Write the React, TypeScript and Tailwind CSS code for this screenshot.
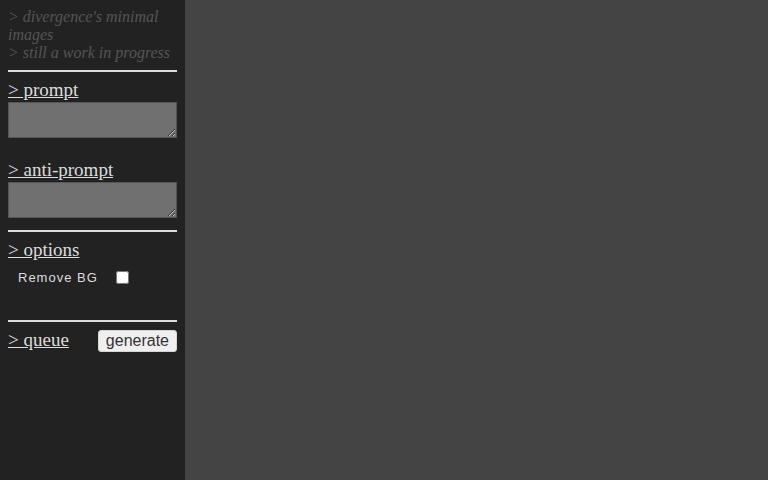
export default function App() {
  return (
    <div className="flex h-[480px] w-[768px] overflow-hidden" style={{ fontFamily: '"Liberation Serif", serif' }}>
      <aside className="flex w-[185px] shrink-0 flex-col bg-[#222222] px-2 pt-[8px]">
        <div className="text-[16px] italic leading-[18px] text-[#555555]">
          <p>&gt; divergence's minimal images</p>
          <p>&gt; still a work in progress</p>
        </div>
        <hr className="mt-[8px] border-t-2 border-[#dddddd]" />

        <a href="#" className="mt-[7px] text-[19px] leading-[22px] text-[#dddddd] underline">&gt; prompt</a>
        <textarea className="mt-[1px] h-[36px] w-full resize-y border border-[#555555] bg-[#707070]" />

        <a href="#" className="mt-[21px] text-[19px] leading-[22px] text-[#dddddd] underline">&gt; anti-prompt</a>
        <textarea className="mt-[1px] h-[36px] w-full resize-y border border-[#555555] bg-[#707070]" />

        <hr className="mt-[12px] border-t-2 border-[#dddddd]" />
        <a href="#" className="mt-[7px] text-[19px] leading-[22px] text-[#dddddd] underline">&gt; options</a>
        <label className="mt-[7px] flex items-center pl-[10px]" style={{ fontFamily: '"Liberation Sans", sans-serif' }}>
          <span className="w-[98px] text-[13px] tracking-[1px] text-[#dddddd]">Remove BG</span>
          <input type="checkbox" className="h-[13px] w-[13px]" />
        </label>

        <hr className="mt-[32px] border-t-2 border-[#dddddd]" />
        <div className="mt-[7px] flex items-start justify-between">
          <a href="#" className="text-[19px] leading-[22px] text-[#dddddd] underline">&gt; queue</a>
          <button
            className="mt-[1px] h-[22px] rounded-[3px] border border-[#d6d6d6] bg-[#efefef] px-[7px] text-[16px] leading-none text-[#333333]"
            style={{ fontFamily: '"Liberation Sans", sans-serif' }}
          >
            generate
          </button>
        </div>
      </aside>
      <main className="flex-1 bg-[#444444]" />
    </div>
  );
}
